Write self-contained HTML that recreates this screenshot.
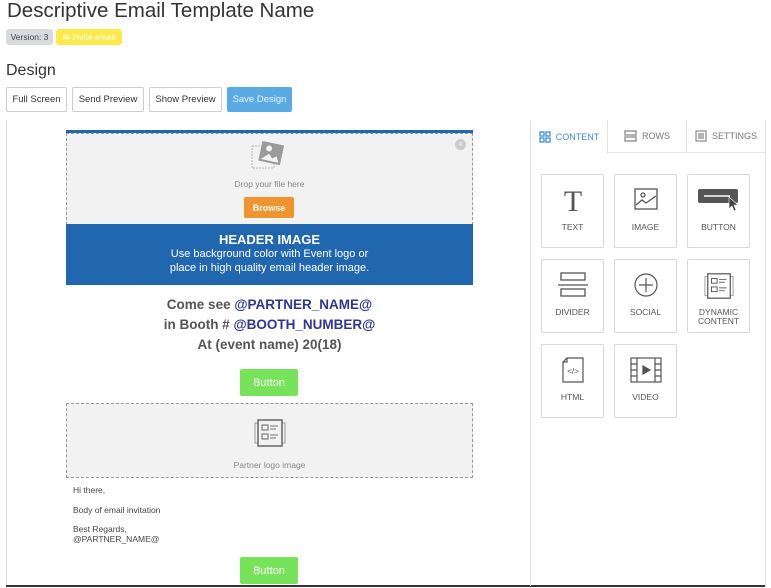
<!DOCTYPE html>
<html><head><style>
*{box-sizing:border-box;margin:0;padding:0}
body{width:771px;height:588px;overflow:hidden;background:#fff;font-family:"Liberation Sans",sans-serif;position:relative;color:#333}
.a{position:absolute}
.btn{position:absolute;top:87px;height:25px;border:1px solid #c9ccd1;border-radius:2px;font-size:9.5px;display:flex;align-items:center;justify-content:center;color:#333;background:#fff}
.card{position:absolute;width:63px;height:74px;border:1px solid #d8d8d8;background:#fff;border-radius:2px}
.card svg{position:absolute;left:50%;transform:translateX(-50%);top:12px}
.card span{position:absolute;left:0;right:0;text-align:center;font-size:8.5px;color:#555;top:48px;line-height:9px}
.tab{position:absolute;top:120px;height:33px;font-size:9px;color:#777;display:flex;align-items:center;justify-content:center;gap:5px;border-bottom:1px solid #e3e3e3;border-left:1px solid #e3e3e3}
.em{font-weight:bold;font-size:13.5px;color:#555;text-align:center;position:absolute;left:66px;width:407px}
.em b{color:#2f3596}
.gbtn{position:absolute;left:240px;width:58px;height:27px;background:#77e35a;border-radius:2px;color:#fff;font-size:11px;display:flex;align-items:center;justify-content:center}
.p{position:absolute;left:73px;font-size:8.5px;color:#444}
</style></head><body>
<div class="a" style="left:7px;top:-1px;font-size:20.5px;color:#333">Descriptive Email Template Name</div>
<div class="a" style="left:6px;top:29px;width:47px;height:16px;background:#d8dadd;border-radius:3px;font-size:8.5px;display:flex;align-items:center;justify-content:center;color:#444">Version: 3</div>
<div class="a" style="left:56px;top:29px;width:66px;height:16px;background:#ffe94a;border-radius:3px;font-size:8.5px;display:flex;align-items:center;justify-content:center;color:#fff">✉ Invite email</div>
<div class="a" style="left:6px;top:62px;font-size:16px;color:#333">Design</div>
<div class="btn" style="left:6px;width:61px">Full Screen</div>
<div class="btn" style="left:72px;width:72px">Send Preview</div>
<div class="btn" style="left:149px;width:73px">Show Preview</div>
<div class="btn" style="left:227px;width:65px;background:#5aabe4;border-color:#5aabe4;color:#e8f3fc">Save Design</div>

<div class="a" style="left:6px;top:120px;width:1px;height:466px;background:#ddd"></div>
<div class="a" style="left:6px;top:585px;width:759px;height:2px;background:#333"></div>
<div class="a" style="left:530px;top:120px;width:1px;height:466px;background:#e3e3e3"></div>
<div class="a" style="left:765px;top:120px;width:1px;height:466px;background:#e3e3e3"></div>

<div class="a" style="left:66px;top:130px;width:407px;height:4px;background:#2067b0"></div>
<div class="a" style="left:66px;top:133px;width:407px;height:92px;background:#f2f2f2;border:1px dashed #999"></div>
<svg class="a" style="left:251px;top:139px" width="36" height="34" viewBox="0 0 36 34"><rect x="1" y="7" width="22" height="22" fill="none" stroke="#bbb" stroke-dasharray="2 1"/><g transform="rotate(12 20 15)"><rect x="9" y="4" width="22" height="20" fill="#9a9a9a"/><circle cx="17" cy="10" r="3" fill="#f2f2f2"/><path d="M11 22 L18 15 L22 19 L26 16 L29 22Z" fill="#f2f2f2"/></g></svg>
<div class="a" style="left:66px;top:179px;width:407px;text-align:center;font-size:8.5px;color:#888">Drop your file here</div>
<div class="a" style="left:244px;top:197px;width:50px;height:21px;background:#f0942f;border-radius:2px;color:#fff;font-size:9px;font-weight:bold;display:flex;align-items:center;justify-content:center">Browse</div>
<div class="a" style="left:455px;top:139px;width:11px;height:11px;border-radius:50%;background:#ccc;color:#f2f2f2;font-size:9px;line-height:11px;text-align:center">×</div>
<div class="a" style="left:66px;top:224px;width:407px;height:61px;background:#2067b0;color:#fff;text-align:center">
<div style="font-weight:bold;font-size:13px;margin-top:8px">HEADER IMAGE</div>
<div style="font-size:11px;line-height:14px">Use background color with Event logo or<br>place in high quality email header image.</div></div>
<div class="em" style="top:297px">Come see <b>@PARTNER_NAME@</b></div>
<div class="em" style="top:317px">in Booth # <b>@BOOTH_NUMBER@</b></div>
<div class="em" style="top:337px">At (event name) 20(18)</div>
<div class="gbtn" style="top:369px">Button</div>
<div class="a" style="left:66px;top:403px;width:407px;height:75px;background:#f2f2f2;border:1px dashed #999"></div>
<svg class="a" style="left:254px;top:419px" width="32" height="28" viewBox="0 0 32 28"><rect x="1" y="4" width="30" height="20" fill="none" stroke="#999"/><rect x="4" y="1" width="24" height="26" fill="#f2f2f2" stroke="#666" stroke-width="1.5"/><rect x="8" y="6" width="6" height="5" fill="none" stroke="#666"/><rect x="8" y="15" width="6" height="5" fill="none" stroke="#666"/><path d="M16 7h8M16 10h6M16 16h8M16 19h6" stroke="#777"/></svg>
<div class="a" style="left:66px;top:460px;width:407px;text-align:center;font-size:8.5px;color:#888">Partner logo image</div>
<div class="p" style="top:485px">Hi there,</div>
<div class="p" style="top:505px">Body of email invitation</div>
<div class="p" style="top:524px;line-height:10px">Best Regards,<br>@PARTNER_NAME@</div>
<div class="gbtn" style="top:557px">Button</div>

<div class="tab" style="left:531px;width:77px;color:#3b8fd6;border-bottom:none;border-left:none;border-right:1px solid #e3e3e3">
<svg width="12" height="12" viewBox="0 0 12 12" fill="none" stroke="#3b8fd6" stroke-width="1.3"><rect x="1" y="1" width="4" height="4"/><rect x="7" y="1" width="4" height="4"/><rect x="1" y="7" width="4" height="4"/><rect x="7" y="7" width="4" height="4"/></svg>CONTENT</div>
<div class="tab" style="left:607px;width:80px;border-left:none">
<svg width="13" height="12" viewBox="0 0 13 12" fill="none" stroke="#888" stroke-width="1.3"><rect x="1" y="1" width="11" height="4"/><rect x="1" y="7" width="11" height="4"/></svg>ROWS</div>
<div class="tab" style="left:686px;width:79px">
<svg width="12" height="12" viewBox="0 0 12 12" fill="none" stroke="#888" stroke-width="1.2"><rect x="1" y="1" width="10" height="10"/><path d="M3 4h6M3 6h6M3 8h6"/></svg>SETTINGS</div>

<div class="card" style="left:541px;top:174px"><svg width="24" height="26" viewBox="0 0 24 26"><text x="12" y="24" text-anchor="middle" font-family="Liberation Serif,serif" font-size="30" fill="#555">T</text></svg><span>TEXT</span></div>
<div class="card" style="left:614px;top:174px"><svg width="24" height="24" viewBox="0 0 24 24" fill="none" stroke="#555" stroke-width="1.3"><rect x="1" y="2" width="22" height="20"/><circle cx="9" cy="8" r="2"/><path d="M2 18 L8 13 L12 16 L22 9"/></svg><span>IMAGE</span></div>
<div class="card" style="left:687px;top:174px"><svg width="44" height="26" viewBox="0 0 44 26"><rect x="1" y="2" width="40" height="14" rx="2" fill="#555"/><path d="M7 9h26" stroke="#fff" stroke-width="1.5"/><path d="M32 10 L32 22 L35 19 L37 24 L39 23 L37 18 L41 18Z" fill="#444" stroke="#fff" stroke-width=".6"/></svg><span>BUTTON</span></div>
<div class="card" style="left:541px;top:259px"><svg width="32" height="26" viewBox="0 0 32 26" fill="none" stroke="#555" stroke-width="1.3"><rect x="4" y="1" width="24" height="7"/><path d="M1 13h30"/><rect x="4" y="17" width="24" height="7"/></svg><span>DIVIDER</span></div>
<div class="card" style="left:614px;top:259px"><svg width="26" height="26" viewBox="0 0 26 26" fill="none" stroke="#555" stroke-width="1.2"><circle cx="13" cy="13" r="11"/><path d="M13 6v14M6 13h14"/></svg><span>SOCIAL</span></div>
<div class="card" style="left:687px;top:259px"><svg width="30" height="28" viewBox="0 0 32 28"><rect x="1" y="4" width="30" height="20" fill="none" stroke="#999"/><rect x="4" y="1" width="24" height="26" fill="#fff" stroke="#555" stroke-width="1.3"/><rect x="8" y="6" width="6" height="5" fill="none" stroke="#555"/><rect x="8" y="15" width="6" height="5" fill="none" stroke="#555"/><path d="M16 7h8M16 10h6M16 16h8M16 19h6" stroke="#666"/></svg><span style="top:48px">DYNAMIC<br>CONTENT</span></div>
<div class="card" style="left:541px;top:344px"><svg width="22" height="26" viewBox="0 0 22 26" fill="none" stroke="#555" stroke-width="1.2"><path d="M1 5 L5 1 H21 V25 H1Z M1 5 H5 V1"/><text x="11" y="17" text-anchor="middle" font-size="8" fill="#555" stroke="none" font-family="Liberation Sans">&lt;/&gt;</text></svg><span>HTML</span></div>
<div class="card" style="left:614px;top:344px"><svg width="32" height="26" viewBox="0 0 32 26" fill="none" stroke="#555" stroke-width="1.2"><rect x="1" y="1" width="30" height="24"/><path d="M7 1v24M25 1v24M1 7h6M1 13h6M1 19h6M25 7h6M25 13h6M25 19h6"/><path d="M13 9 L20 13 L13 17Z" fill="#555"/></svg><span>VIDEO</span></div>
</body></html>
